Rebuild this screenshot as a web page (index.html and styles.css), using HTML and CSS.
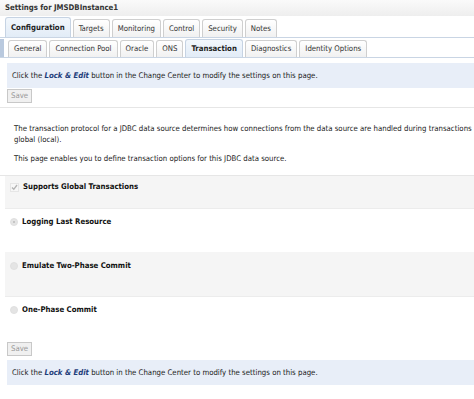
FILE: index.html
```html
<!DOCTYPE html>
<html>
<head>
<meta charset="utf-8">
<link rel="stylesheet" href="styles.css">
</head>
<body>
<div class="titlebar">Settings for JMSDBInstance1</div>
<div class="tabs top">
  <div class="tab active">Configuration</div>
  <div class="tab">Targets</div>
  <div class="tab">Monitoring</div>
  <div class="tab">Control</div>
  <div class="tab">Security</div>
  <div class="tab">Notes</div>
</div>
<div class="subrow">
  <div class="strip"></div>
  <div class="tabs sub">
    <div class="tab">General</div>
    <div class="tab">Connection Pool</div>
    <div class="tab">Oracle</div>
    <div class="tab">ONS</div>
    <div class="tab active">Transaction</div>
    <div class="tab">Diagnostics</div>
    <div class="tab">Identity Options</div>
  </div>
</div>
<div class="content">
  <div class="info">Click the <em>Lock &amp; Edit</em> button in the Change Center to modify the settings on this page.</div>
  <div class="btnrow"><span class="btn">Save</span></div>
  <div class="desc">
    <p>The transaction protocol for a JDBC data source determines how connections from the data source are handled during transactions<br>global (local).</p>
    <p>This page enables you to define transaction options for this JDBC data source.</p>
  </div>
  <div class="opt shaded r1"><span class="chk"><svg width="9" height="9" viewBox="0 0 9 9"><rect x="0.5" y="0.5" width="8" height="8" fill="#f7f7f7" stroke="#e6e6e6"/><path d="M2 4.5 L3.8 6.3 L7 2" fill="none" stroke="#b4b4b4" stroke-width="1.4"/></svg></span><b>Supports Global Transactions</b></div>
  <div class="opt r2"><span class="radio on"></span><b>Logging Last Resource</b></div>
  <div class="opt shaded r3"><span class="radio"></span><b>Emulate Two-Phase Commit</b></div>
  <div class="opt r4"><span class="radio"></span><b>One-Phase Commit</b></div>
  <div class="btnrow b2"><span class="btn">Save</span></div>
  <div class="info">Click the <em>Lock &amp; Edit</em> button in the Change Center to modify the settings on this page.</div>
</div>
</body>
</html>
```
FILE: styles.css
```css
html, body { margin: 0; padding: 0; background: #fff; }
body {
  font-family: "DejaVu Sans Condensed", "DejaVu Sans", sans-serif;
  font-size: 7.75px;
  color: #222;
  width: 474px;
  height: 399px;
  overflow: hidden;
}
.titlebar {
  height: 16px;
  line-height: 16px;
  padding-left: 5px;
  font-weight: bold;
  color: #333;
  background: linear-gradient(#fafafa, #eeeeee);
}
.tabs { display: flex; gap: 2px; align-items: flex-end; }
.tabs.top {
  padding: 2px 0 0 5px;
  height: 19px;
  border-bottom: 1px solid #c9d5e4;
}
.tab {
  border: 1px solid #cfcfcf;
  border-bottom: none;
  border-radius: 3px 3px 0 0;
  background: linear-gradient(#ffffff, #f1f1f1);
  padding: 0 5px;
  color: #333;
  white-space: nowrap;
}
.top .tab { height: 17px; line-height: 17px; }
.tab.active {
  background: linear-gradient(#f2f7fc, #e2ecf7);
  border-color: #c6d3e3;
  font-weight: bold;
  color: #1e1e1e;
}
.top .tab.active { height: 19px; line-height: 19px; }
.subrow {
  display: flex;
  height: 19px;
  border-bottom: 1px solid #c9d5e4;
}
.strip { width: 4px; background: #b9c9de; margin-top: 1px; }
.tabs.sub { padding: 2px 0 0 4px; }
.sub .tab { height: 16px; line-height: 16px; }
.sub .tab.active { height: 17px; line-height: 17px; }
.content { padding: 5px 0 0 7px; }
.info {
  background: #e8eef8;
  height: 25px;
  line-height: 25px;
  padding-left: 5px;
  color: #222;
}
.info em { font-style: italic; font-weight: bold; color: #1d3c7a; }
.btnrow { height: 18px; padding-top: 1px; }
.btn {
  display: inline-block;
  height: 12px;
  line-height: 12px;
  padding: 0 3px;
  border: 1px solid #c8c8c8;
  background: #f0f0f0;
  color: #999;
}
.desc {
  border-top: 1px solid #e6e6e6;
  border-bottom: 1px solid #e6e6e6;
  margin-left: -7px;
  padding: 15px 0 11px 14px;
  height: 41px;
}
.desc p { margin: 0 0 8px 0; line-height: 11px; white-space: nowrap; }
.desc p:last-child { margin-bottom: 0; }
.opt {
  box-sizing: border-box;
  display: flex;
  align-items: flex-start;
  gap: 4px;
  margin-left: -7px;
  padding-left: 10px;
  color: #111;
}
.opt b { font-weight: bold; line-height: 12px; }
.shaded { background: #f5f5f5; border-bottom: 1px solid #ececec; margin-left: -2px; padding-left: 5px; }
.r1 { height: 33px; padding-top: 5px; }
.r2 { height: 43px; padding-top: 7px; }
.r3 { height: 45px; padding-top: 8px; }
.r4 { height: 44px; padding-top: 7px; }
.chk { width: 9px; height: 9px; margin-top: 2px; display: inline-flex; }
.radio {
  width: 8px; height: 8px; border-radius: 50%;
  background: #e4e4e4; border: 1px solid #e0e0e0;
  box-sizing: border-box; margin-top: 2px;
  position: relative;
}
.radio.on::after {
  content: ""; position: absolute; left: 2px; top: 2px;
  width: 2px; height: 2px; border-radius: 50%; background: #bbb;
}
.b2 { height: 18px; }
```
